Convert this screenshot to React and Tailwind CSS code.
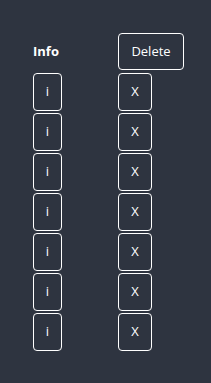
import React from 'react';

const rows = [0, 1, 2, 3, 4, 5, 6];

const App = () => {
    return (
        <div className="min-h-screen w-full bg-[#2e3440] pt-[33px] pl-[33px] text-white font-['Open_Sans',sans-serif] text-[13px]">
            <div className="grid grid-cols-[85px_auto] gap-y-[2px]">
                <div className="h-[37px] flex items-center font-bold">Info</div>
                <div className="mb-[1px]">
                    <button className="h-[37px] w-[66px] border border-white rounded-[4px] text-white">Delete</button>
                </div>
                {rows.map((r) => (
                    <React.Fragment key={r}>
                        <div>
                            <button className="h-[38px] w-[29px] border border-white rounded-[4px] text-white">i</button>
                        </div>
                        <div>
                            <button className="h-[38px] w-[34px] border border-white rounded-[4px] text-white">X</button>
                        </div>
                    </React.Fragment>
                ))}
            </div>
        </div>
    );
};

export default App;
